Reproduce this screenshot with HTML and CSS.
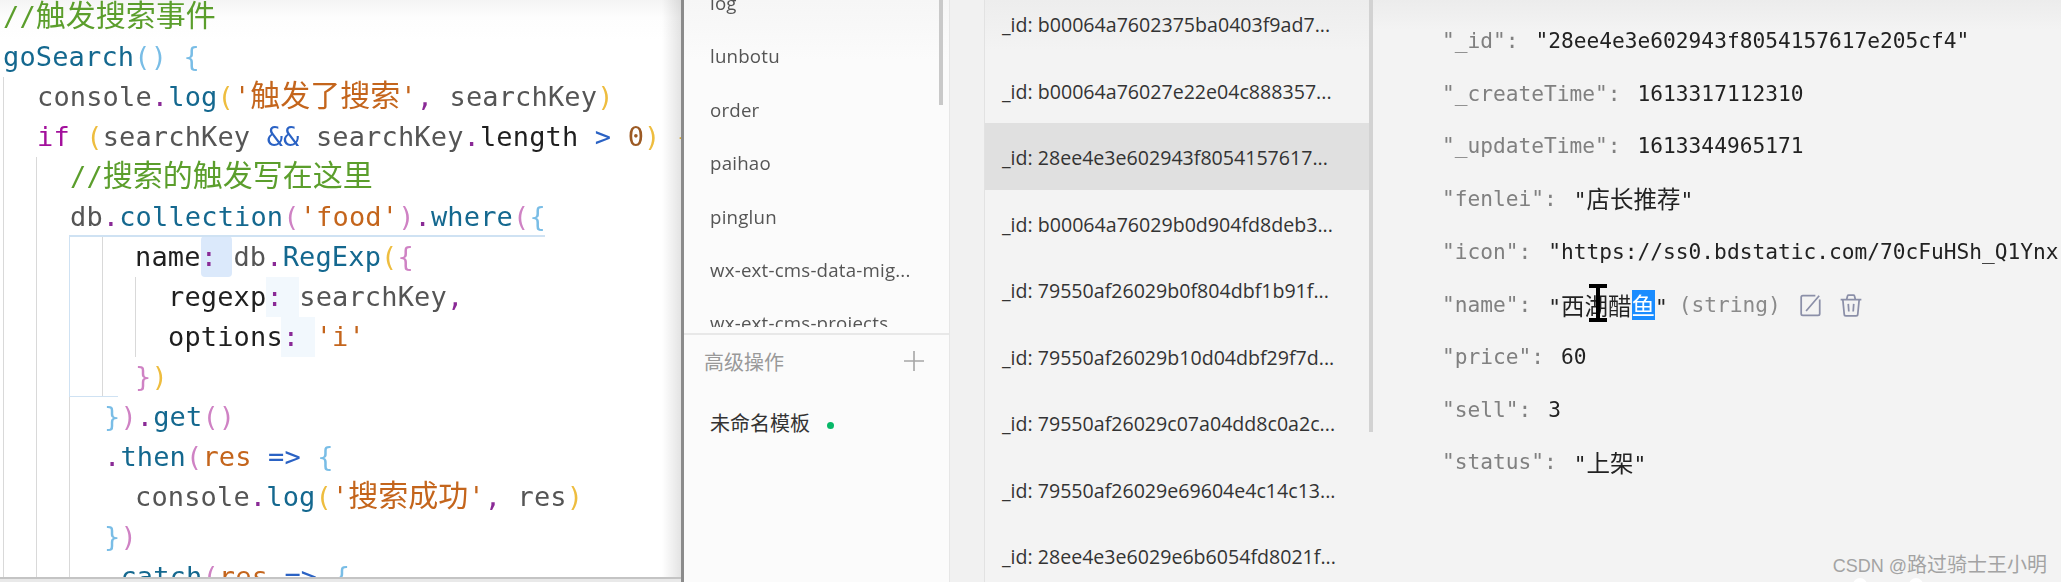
FILE: index.html
```html
<!DOCTYPE html>
<html lang="zh-CN">
<head>
<meta charset="utf-8">
<title>搜索</title>
<link rel="stylesheet" href="styles.css">
</head>
<body>
<div class="app">
  <section class="code">
    <div class="overlay hl hl-name"></div>
    <div class="overlay hl hl-regexp"></div>
    <div class="overlay hl hl-options"></div>
    <div class="overlay guide g1"></div>
    <div class="overlay guide g2"></div>
    <div class="overlay guide g3"></div>
    <div class="overlay guide g4"></div>
    <div class="overlay guide g5"></div>
    <div class="overlay pair-box"></div>
    <div class="overlay pair-foot"></div>
    <div class="lines">
      <div class="ln i0"><span class="cm">//<span class="zh">触发搜索事件</span></span></div>
      <div class="ln i0"><span class="fn">goSearch</span><span class="lb">()</span> <span class="lb">{</span></div>
      <div class="ln i1"><span class="va">console</span><span class="pp">.</span><span class="fn">log</span><span class="ye">(</span><span class="st">'<span class="zh">触发了搜索</span>'</span><span class="pp">,</span> <span class="va">searchKey</span><span class="ye">)</span></div>
      <div class="ln i1"><span class="kw">if</span> <span class="ye">(</span><span class="va">searchKey</span> <span class="op">&amp;&amp;</span> <span class="va">searchKey</span><span class="pp">.</span><span class="bk">length</span> <span class="op">&gt;</span> <span class="nu">0</span><span class="ye">)</span> <span class="ye">{</span></div>
      <div class="ln i2"><span class="cm">//<span class="zh">搜索的触发写在这里</span></span></div>
      <div class="ln i2"><span class="va">db</span><span class="pp">.</span><span class="fn">collection</span><span class="pk">(</span><span class="st">'food'</span><span class="pk">)</span><span class="pp">.</span><span class="fn">where</span><span class="pk">(</span><span class="lb">{</span></div>
      <div class="ln i4"><span class="bk">name</span><span class="pp">:</span> <span class="va">db</span><span class="pp">.</span><span class="fn">RegExp</span><span class="ye">(</span><span class="pk">{</span></div>
      <div class="ln i5"><span class="bk">regexp</span><span class="pp">:</span> <span class="va">searchKey</span><span class="pp">,</span></div>
      <div class="ln i5"><span class="bk">options</span><span class="pp">:</span> <span class="st">'i'</span></div>
      <div class="ln i4"><span class="pk">}</span><span class="ye">)</span></div>
      <div class="ln i3"><span class="lb">}</span><span class="pk">)</span><span class="pp">.</span><span class="fn">get</span><span class="pk">()</span></div>
      <div class="ln i3"><span class="pp">.</span><span class="fn">then</span><span class="pk">(</span><span class="st">res</span> <span class="op">=&gt;</span> <span class="lb">{</span></div>
      <div class="ln i4"><span class="va">console</span><span class="pp">.</span><span class="fn">log</span><span class="ye">(</span><span class="st">'<span class="zh">搜索成功</span>'</span><span class="pp">,</span> <span class="va">res</span><span class="ye">)</span></div>
      <div class="ln i3"><span class="lb">}</span><span class="pk">)</span></div>
      <div class="ln i3"><span class="pp">.</span><span class="fn">catch</span><span class="pk">(</span><span class="st">res</span> <span class="op">=&gt;</span> <span class="lb">{</span></div>
    </div>
  </section>

  <aside class="side">
    <div class="coll-wrap">
      <ul class="colls">
        <li>log</li>
        <li>lunbotu</li>
        <li>order</li>
        <li>paihao</li>
        <li>pinglun</li>
        <li>wx-ext-cms-data-mig...</li>
        <li>wx-ext-cms-projects</li>
      </ul>
      <div class="overlay side-thumb"></div>
    </div>
    <div class="adv-head">
      <span>高级操作</span>
      <svg class="plus" viewBox="0 0 20 20" width="20" height="20"><path d="M10 0v20M0 10h20"/></svg>
    </div>
    <div class="tpl"><span>未命名模板</span><i class="dot"></i></div>
  </aside>

  <div class="gutter"></div>

  <section class="records">
    <div class="rec">_id: b00064a7602375ba0403f9ad7...</div>
    <div class="rec">_id: b00064a76027e22e04c888357...</div>
    <div class="rec sel">_id: 28ee4e3e602943f8054157617...</div>
    <div class="rec">_id: b00064a76029b0d904fd8deb3...</div>
    <div class="rec">_id: 79550af26029b0f804dbf1b91f...</div>
    <div class="rec">_id: 79550af26029b10d04dbf29f7d...</div>
    <div class="rec">_id: 79550af26029c07a04dd8c0a2c...</div>
    <div class="rec">_id: 79550af26029e69604e4c14c13...</div>
    <div class="rec">_id: 28ee4e3e6029e6b6054fd8021f...</div>
    <div class="overlay rec-thumb"></div>
  </section>

  <section class="detail">
    <div class="row"><span class="key">"_id":</span><span class="val">"28ee4e3e602943f8054157617e205cf4"</span></div>
    <div class="row"><span class="key">"_createTime":</span><span class="val">1613317112310</span></div>
    <div class="row"><span class="key">"_updateTime":</span><span class="val">1613344965171</span></div>
    <div class="row"><span class="key">"fenlei":</span><span class="val">"<span class="zh2">店长推荐</span>"</span></div>
    <div class="row"><span class="key">"icon":</span><span class="val">"https://ss0.bdstatic.com/70cFuHSh_Q1Ynx</span></div>
    <div class="row r-name"><span class="key">"name":</span><span class="val">"<span class="zh2">西湖醋</span><span class="zh2 picked">鱼</span>"</span><span class="type">(string)</span>
      <svg class="act edit" viewBox="0 0 22 22" width="24" height="24"><path d="M19 6v13a1.500 1.500 0 0 1-1.500 1.500h-14A1.500 1.500 0 0 1 2 19V4a1.500 1.500 0 0 1 1.500-1.500H15M6.500 16.500 18.500 2.500"/></svg>
      <svg class="act trash" viewBox="0 0 22 22" width="24" height="24"><path d="M1.500 6h19M7 6l.8-3.300A1 1 0 0 1 8.800 2h4.400a1 1 0 0 1 1 .7L15 6M3.500 6l1.300 13.500A1.500 1.500 0 0 0 6.300 21h9.400a1.500 1.500 0 0 0 1.500-1.500L18.500 6M8.500 10l.5 7M13.500 10l-.5 7"/></svg>
    </div>
    <div class="row"><span class="key">"price":</span><span class="val">60</span></div>
    <div class="row"><span class="key">"sell":</span><span class="val">3</span></div>
    <div class="row"><span class="key">"status":</span><span class="val">"<span class="zh2">上架</span>"</span></div>
    <svg class="overlay ibeam" viewBox="0 0 22 38" width="22" height="38"><path d="M2 2h18M2 36h18M11 2v34"/></svg>
    <div class="overlay mark"><span class="mark-lat">CSDN @</span><span class="mark-zh">路过骑士王小明</span></div>
    <i class="overlay bub b1"></i>
    <i class="overlay bub b2"></i>
  </section>
</div>
</body>
</html>
```
FILE: styles.css
```css
* { box-sizing: border-box; }
html, body { margin: 0; padding: 0; }
body { width: 2061px; height: 582px; overflow: hidden; background: #f3f3f3; }
.overlay { position: absolute; }
.app { display: flex; width: 2061px; height: 582px; overflow: hidden; }

/* code editor */
.code {
  position: relative; flex: 0 0 684px; height: 582px; overflow: hidden;
  background: linear-gradient(#f4f4f4 0, #fdfdfd 18px, #fff 40px);
  border-right: 3px solid #8b8b8b;
}
.code::after {
  content: ""; position: absolute; top: 0; right: 0; bottom: 0; width: 19px;
  background: linear-gradient(90deg, rgba(0,0,0,0), rgba(0,0,0,.11));
}
.code::before {
  content: ""; position: absolute; left: 0; right: 0; top: 577px; bottom: 0;
  background: #e9e9e9; border-top: 2px solid #c4c4c4; z-index: 2;
}
.lines { position: relative; margin-top: -3px; }
.ln {
  height: 40px; line-height: 40px; white-space: pre;
  font-family: "DejaVu Sans Mono", "Noto Sans CJK SC", monospace;
  font-size: 27px; letter-spacing: .15px; color: #555;
  filter: blur(.35px);
}
.i0 { padding-left: 3px; }
.i1 { padding-left: 37px; }
.i2 { padding-left: 70px; }
.i3 { padding-left: 104px; }
.i4 { padding-left: 135px; }
.i5 { padding-left: 168px; }
.zh { font-family: "Noto Sans CJK SC", sans-serif; font-size: 30px; letter-spacing: 0; line-height: 0; }
.cm { color: #5b9e2c; }
.fn { color: #14688f; }
.lb { color: #79bde6; }
.va { color: #555; }
.pp { color: #8a2a96; }
.ye { color: #eebd3f; }
.pk { color: #cf82c4; }
.st { color: #c4651c; }
.kw { color: #a3109c; }
.op { color: #2a62c4; }
.nu { color: #9c5a24; }
.bk { color: #1f1f1f; }
.guide { width: 1px; background: #d9d9d9; }
.g1 { left: 3px; top: 77px; height: 505px; }
.g2 { left: 36px; top: 157px; height: 425px; }
.g3 { left: 69px; top: 397px; height: 185px; }
.g4 { left: 102px; top: 237px; height: 160px; }
.g5 { left: 135px; top: 277px; height: 80px; }
.pair-box {
  left: 69px; top: 235px; width: 476px; height: 162px;
  border-top: 2px solid #cfe2f3; border-left: 1px solid #cfe2f3;
}
.pair-foot { left: 69px; top: 396px; width: 49px; height: 1px; background: #cfe2f3; }
.hl { background: #dbe9fb; }
.hl-name { left: 201px; top: 236px; width: 31px; height: 41px; border-radius: 4px; }
.hl-regexp { left: 266px; top: 277px; width: 33px; height: 40px; background: #f2f8fd; }
.hl-options { left: 281px; top: 317px; width: 34px; height: 40px; background: #f2f8fd; }

/* collections sidebar */
.side {
  flex: 0 0 266px; height: 582px; display: flex; flex-direction: column;
  background: linear-gradient(#f6f6f6 0, #fbfbfb 60px, #fbfbfb 100%);
  border-right: 1px solid #e6e6e6;
  font-family: "Open Sans", "Noto Sans CJK SC", sans-serif;
}
.coll-wrap { position: relative; flex: 0 0 335px; height: 335px; overflow: hidden; border-bottom: 2px solid #e8e8e8; }
.colls { list-style: none; margin: -24px 0 0; padding: 0; height: 351px; overflow: hidden; filter: blur(.3px); }
.colls li { height: 53.4px; line-height: 53.4px; padding-left: 26px; font-size: 18.7px; letter-spacing: .2px; color: #555; white-space: nowrap; }
.side-thumb { left: 255px; top: 0; width: 4px; height: 105px; background: #c9c9c9; }
.adv-head {
  display: flex; align-items: center; justify-content: space-between;
  height: 50px; margin-top: 1px; padding: 0 25px 0 20px;
  font-size: 20px; color: #999; font-family: "Noto Sans CJK SC", sans-serif;
}
.plus { fill: none; stroke: #a6a6a6; stroke-width: 1.6; }
.tpl {
  display: flex; align-items: center; gap: 17px; margin-top: 23px; padding-left: 26px;
  font-family: "Noto Sans CJK SC", sans-serif; font-size: 20px; line-height: 28px; color: #333;
}
.dot { width: 7px; height: 7px; margin-top: 4px; border-radius: 50%; background: #07b868; }

.gutter { flex: 0 0 35px; height: 582px; background: #f1f1f1; border-right: 1px solid #e2e2e2; }

/* records list */
.records {
  position: relative; flex: 0 0 388px; height: 582px; overflow: hidden;
  background: linear-gradient(#ededed 0, #f3f3f3 50px);
  font-family: "Open Sans", sans-serif; font-size: 19.6px; color: #333;
  display: flex; flex-direction: column;
}
.rec { flex: 0 0 66.5px; height: 66.5px; line-height: 70px; padding-left: 17px; white-space: nowrap; position: relative; top: -10px; }
.rec.sel { background: #e0e0e0; }
.rec-thumb { left: 384px; top: 0; width: 4px; height: 432px; background: #d2d2d2; }

/* document detail */
.detail {
  position: relative; flex: 1 1 auto; height: 582px; overflow: hidden; padding: 14px 0 0 69px;
  background: linear-gradient(#ececec 0, #f3f3f3 30px);
  font-family: "DejaVu Sans Mono", "Noto Sans CJK SC", monospace; font-size: 21.2px;
}
.row { display: flex; align-items: center; height: 52.7px; white-space: pre; filter: blur(.25px); }
.r-name { padding-top: 2px; }
.key { color: #808080; margin-right: 17px; }
.val { color: #222; }
.zh2 { font-family: "Noto Sans CJK SC", sans-serif; font-size: 23.5px; }
.picked { background: #1a8cff; color: #fff; display: inline-block; line-height: 30px; }
.type { color: #8a8a8a; margin-left: 11px; }
.act { fill: none; stroke: #8b8fa8; stroke-width: 1.6; flex: none; }
.edit { margin-left: 18px; }
.trash { margin-left: 16px; }
.ibeam { left: 214px; top: 284px; fill: none; stroke: #000; stroke-width: 4; }
.mark {
  right: 14px; top: 550px; font-family: "Liberation Sans", "Noto Sans CJK SC", sans-serif;
  line-height: 28px; color: #a3a3a3; white-space: nowrap;
}
.mark-lat { font-size: 18px; }
.mark-zh { font-family: "Noto Sans CJK SC", sans-serif; font-size: 20px; }
.bub { top: 578px; width: 14px; height: 14px; border-radius: 50%; background: #fff; }
.b1 { left: 480px; }
.b2 { left: 536px; }
```
